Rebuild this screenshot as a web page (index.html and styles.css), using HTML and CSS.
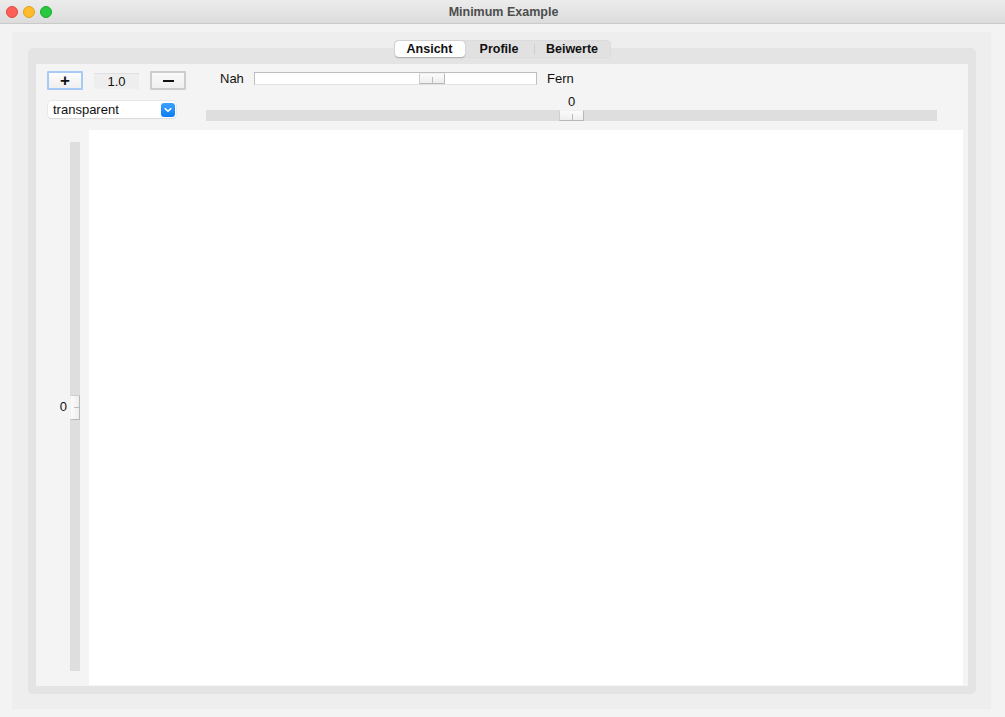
FILE: index.html
```html
<!DOCTYPE html>
<html>
<head>
<meta charset="utf-8">
<link rel="stylesheet" href="styles.css">
</head>
<body>
<div class="window">
  <div class="titlebar">
    <div class="lights">
      <span class="light red"></span>
      <span class="light yellow"></span>
      <span class="light green"></span>
    </div>
    <div class="title">Minimum Example</div>
  </div>
  <div class="winbody">
    <div class="frame">
      <div class="tabbar">
        <div class="tab tab-a selected">Ansicht</div>
        <div class="tab tab-p">Profile</div>
        <div class="tab-sep"></div>
        <div class="tab tab-b">Beiwerte</div>
      </div>
      <div class="pane">
        <div class="content">
          <div class="top">
            <div class="leftcol">
              <div class="row1">
                <button class="btn btn-focus">+</button>
                <div class="field">1.0</div>
                <button class="btn btn-minus"><span class="dash"></span></button>
              </div>
              <div class="select">
                <span class="select-text">transparent</span>
                <span class="select-btn">
                  <svg width="8" height="6" viewBox="0 0 8 6"><path d="M1.2 1.6 L4 4.3 L6.8 1.6" fill="none" stroke="#fff" stroke-width="1.5" stroke-linecap="round" stroke-linejoin="round"/></svg>
                </span>
              </div>
            </div>
            <div class="rightcol">
              <div class="nahrow">
                <span class="lbl">Nah</span>
                <div class="wslider">
                  <span class="handle-h nah-handle"></span>
                </div>
                <span class="lbl fern">Fern</span>
              </div>
              <div class="valrow"><span class="val">0</span></div>
              <div class="gtrack">
                <span class="handle-h g-handle"></span>
              </div>
            </div>
          </div>
          <div class="bottom">
            <div class="vcol">
              <div class="vtrack">
                <span class="vlabel">0</span>
                <span class="handle-v"></span>
              </div>
            </div>
            <div class="canvas"></div>
          </div>
        </div>
      </div>
    </div>
  </div>
</div>
</body>
</html>
```

FILE: styles.css
```css
* { box-sizing: border-box; }
html, body {
  margin: 0;
  padding: 0;
}
body {
  width: 1005px;
  height: 717px;
  overflow: hidden;
  font-family: "Liberation Sans", Arial, sans-serif;
  font-size: 13px;
  color: #1a1a1a;
  background: #f3f3f3;
}
.window {
  width: 1005px;
  height: 717px;
  display: flex;
  flex-direction: column;
}
.titlebar {
  height: 24px;
  flex: none;
  background: linear-gradient(#ececec, #dcdcdc);
  border-bottom: 1px solid #cacaca;
  display: flex;
  align-items: center;
  position: relative;
}
.lights {
  display: flex;
  gap: 5px;
  padding-left: 6px;
  position: absolute;
  left: 0;
  top: 6px;
}
.light {
  width: 12px;
  height: 12px;
  border-radius: 50%;
  display: block;
}
.red { background: #fe5f57; border: 0.5px solid #e2463f; }
.yellow { background: #febc2e; border: 0.5px solid #e1a116; }
.green { background: #28c840; border: 0.5px solid #14ae2b; }
.title {
  flex: 1;
  text-align: center;
  font-weight: bold;
  font-size: 12.5px;
  color: #4d4d4d;
  padding-left: 2px;
}
.winbody {
  flex: 1;
  min-height: 0;
  padding: 8px 14px 8px 12px;
  display: flex;
  background: #f3f3f3;
}
.frame {
  flex: 1;
  min-width: 0;
  background: #eeeeee;
  padding: 8px 15px 15px 16px;
  display: flex;
  flex-direction: column;
}
.tabbar {
  align-self: center;
  height: 18px;
  background: #e1e1e1;
  border-radius: 5px;
  padding: 1px;
  display: flex;
  align-items: center;
  position: relative;
  z-index: 1;
  margin-bottom: -10px;
  box-shadow: inset 0 0 0 0.5px #d8d8d8;
}
.tab {
  height: 16px;
  line-height: 16px;
  text-align: center;
  font-weight: bold;
  font-size: 12.5px;
  color: #111;
  border-radius: 4px;
}
.tab-a { width: 70px; }
.tab-p { width: 69px; }
.tab-b { width: 75px; }
.tab-sep {
  width: 1px;
  height: 11px;
  background: #cfcfcf;
}
.tab.selected {
  background: #ffffff;
  box-shadow: 0 0.5px 1.5px rgba(0,0,0,0.25);
}
.pane {
  flex: 1;
  min-height: 0;
  background: #e4e4e4;
  border-radius: 5px;
  padding: 16px 8px 8px 8px;
  display: flex;
}
.content {
  flex: 1;
  min-width: 0;
  background: #f4f4f4;
  display: flex;
  flex-direction: column;
}
.top {
  height: 66px;
  flex: none;
  display: flex;
  padding-left: 11px;
}
.leftcol {
  width: 139px;
  padding-top: 7px;
  display: flex;
  flex-direction: column;
}
.row1 {
  display: flex;
  align-items: center;
  gap: 11px;
  height: 19px;
}
.btn {
  width: 36px;
  height: 19px;
  margin: 0;
  padding: 0;
  font-family: "Liberation Sans", Arial, sans-serif;
  font-size: 17px;
  font-weight: bold;
  line-height: 15px;
  color: #111;
  display: flex;
  align-items: center;
  justify-content: center;
}
.btn-focus {
  border: 2px solid #a7caf4;
  border-radius: 1px;
  background: linear-gradient(#fdfdfd, #efefef);
}
.btn-minus {
  border: 2px solid #cdcdcd;
  border-radius: 1px;
  background: linear-gradient(#f9f9f9, #efefef);
}
.dash {
  display: block;
  width: 11px;
  height: 2px;
  background: #111;
}
.field {
  width: 45px;
  height: 16px;
  background: #eeeeee;
  border-top: 1px solid #e0e0e0;
  text-align: center;
  line-height: 15px;
  font-size: 13px;
  color: #111;
}
.select {
  margin-top: 11px;
  margin-left: 1px;
  width: 128px;
  height: 17px;
  background: #ffffff;
  border-radius: 4px;
  box-shadow: 0 0 0 0.5px #e0e0e0, 0 0.5px 1px rgba(0,0,0,0.12);
  display: flex;
  align-items: center;
  justify-content: space-between;
  padding: 0 1px 0 5px;
}
.select-text {
  font-size: 13px;
  color: #111;
  line-height: 17px;
}
.select-btn {
  width: 14px;
  height: 14px;
  border-radius: 3px;
  background: linear-gradient(#3fa2ff, #0a7cf2);
  display: flex;
  align-items: center;
  justify-content: center;
}
.rightcol {
  margin-left: 20px;
  width: 731px;
  display: flex;
  flex-direction: column;
}
.nahrow {
  margin-top: 8px;
  height: 13px;
  display: flex;
  align-items: center;
  padding-left: 14px;
}
.lbl {
  font-size: 13px;
  color: #111;
  width: 34px;
  line-height: 13px;
}
.fern {
  margin-left: 10px;
}
.wslider {
  width: 283px;
  height: 13px;
  background: #ffffff;
  border: 1px solid #bdbdbd;
  border-bottom-color: #e2e2e2;
  position: relative;
}
.handle-h {
  position: absolute;
  width: 26px;
  height: 11px;
  background: linear-gradient(#fbfbfb, #eeeeee);
  border: 1px solid #b8b8b8;
  border-top-color: #f0f0f0;
  border-left-color: #cfcfcf;
}
.handle-h::after {
  content: "";
  position: absolute;
  left: 12px;
  bottom: 0;
  width: 1px;
  height: 6px;
  background: #bcbcbc;
}
.nah-handle {
  left: 164px;
  top: 0;
}
.valrow {
  margin-top: 10px;
  height: 14px;
  line-height: 14px;
  font-size: 13px;
  color: #111;
}
.val {
  display: inline-block;
  margin-left: 353px;
  width: 25px;
  text-align: center;
}
.gtrack {
  margin-top: 1px;
  height: 11px;
  background: #dedede;
  position: relative;
}
.g-handle {
  left: 353px;
  top: 0;
  width: 25px;
}
.bottom {
  flex: 1;
  min-height: 0;
  display: flex;
}
.vcol {
  width: 44px;
  flex: none;
  padding-left: 34px;
  padding-top: 12px;
}
.vtrack {
  width: 10px;
  height: 529px;
  background: #dedede;
  position: relative;
}
.handle-v {
  position: absolute;
  left: 0;
  top: 253px;
  width: 10px;
  height: 25px;
  background: linear-gradient(90deg, #fbfbfb, #eeeeee);
  border: 1px solid #b8b8b8;
  border-left-color: #f0f0f0;
  border-top-color: #cfcfcf;
}
.handle-v::after {
  content: "";
  position: absolute;
  top: 11px;
  right: 0;
  width: 5px;
  height: 1px;
  background: #bcbcbc;
}
.vlabel {
  position: absolute;
  right: 13px;
  top: 258px;
  font-size: 13px;
  line-height: 14px;
  color: #111;
}
.canvas {
  width: 874px;
  flex: none;
  margin-left: 9px;
  margin-bottom: 1px;
  background: #ffffff;
}
```
